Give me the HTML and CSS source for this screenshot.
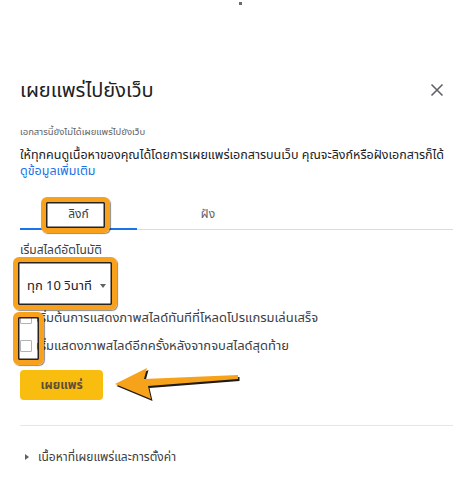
FILE: index.html
```html
<!DOCTYPE html>
<html lang="th">
<head>
<meta charset="utf-8">
<title>เผยแพร่ไปยังเว็บ</title>
<link rel="stylesheet" href="styles.css">
</head>
<body>
<div class="speck"></div>
<main class="dialog">
  <header class="head">
    <h1 class="title">เผยแพร่ไปยังเว็บ</h1>
    <button class="close" aria-label="ปิด">
      <svg width="14" height="14" viewBox="0 0 14 14"><path d="M1.5 1.5L12.5 12.5M12.5 1.5L1.5 12.5" stroke="#5f6368" stroke-width="1.6" fill="none"/></svg>
    </button>
  </header>
  <p class="status">เอกสารนี้ยังไม่ได้เผยแพร่ไปยังเว็บ</p>
  <p class="desc">ให้ทุกคนดูเนื้อหาของคุณได้โดยการเผยแพร่เอกสารบนเว็บ คุณจะลิงก์หรือฝังเอกสารก็ได้ <a class="more" href="#">ดูข้อมูลเพิ่มเติม</a></p>

  <nav class="tabs">
    <div class="tab tab-link active">ลิงก์<span class="hl hl-tab"></span></div>
    <div class="tab tab-embed">ฝัง</div>
  </nav>

  <section class="form">
    <div class="label">เริ่มสไลด์อัตโนมัติ</div>
    <div class="select">ทุก 10 วินาที <span class="caret"></span><span class="hl hl-select"></span></div>
    <div class="checks">
      <label class="check"><span class="box"></span>เริ่มต้นการแสดงภาพสไลด์ทันทีที่โหลดโปรแกรมเล่นเสร็จ</label>
      <label class="check"><span class="box"></span>เริ่มแสดงภาพสไลด์อีกครั้งหลังจากจบสไลด์สุดท้าย</label>
      <span class="hl hl-checks"></span>
    </div>
    <div class="actions">
      <button class="publish">เผยแพร่</button>
      <svg class="arrow" width="135" height="40" viewBox="0 0 135 40">
        <polygon points="6.5,21 38.5,5 35.5,16 129.5,12 129.5,16 39.5,23 42.5,36" fill="#1e1a14"/>
        <polygon points="5,19 37,3 34,14 128,10 128,14 38,21 41,34" fill="#f7a21b"/>
      </svg>
    </div>
  </section>

  <hr class="sep">
  <div class="disclosure"><span class="tri"></span>เนื้อหาที่เผยแพร่และการตั้งค่า</div>
</main>
</body>
</html>
```

FILE: styles.css
```css
* { box-sizing: border-box; }

html, body {
  margin: 0;
  background: #ffffff;
}

body {
  font-family: "Noto Sans", "Noto Sans Thai", Roboto, sans-serif;
  color: #202124;
  position: relative;
  width: 474px;
  height: 486px;
  overflow: hidden;
}

.speck {
  position: absolute;
  left: 239px;
  top: 2px;
  width: 3px;
  height: 3px;
  background: #6b6b6b;
}

.dialog {
  padding: 76px 21px 0 20px;
}

.head {
  display: flex;
  align-items: center;
  justify-content: space-between;
  height: 28px;
}

.title {
  margin: 0;
  font-size: 20px;
  font-weight: 400;
  line-height: 28px;
  color: #202124;
}

.close {
  border: 0;
  background: none;
  padding: 0;
  margin-right: 9px;
  width: 14px;
  height: 14px;
  display: flex;
}

.status {
  margin: 21px 0 0;
  font-size: 9.5px;
  line-height: 14px;
  color: #5f6368;
}

.desc {
  margin: 8px 0 0;
  font-size: 12.5px;
  line-height: 16px;
  color: #202124;
}

.more {
  color: #1a73e8;
  text-decoration: none;
  white-space: nowrap;
}

.tabs {
  margin-top: 18px;
  display: flex;
  border-bottom: 1px solid #dadce0;
}

.tab {
  position: relative;
  padding-top: 3px;
  line-height: 28px;
  height: 33px;
  margin-bottom: -1px;
  border-bottom: 2px solid transparent;
  text-align: center;
  font-size: 12px;
  color: #5f6368;
}

.tab-link { width: 117px; }
.tab-embed { width: 142px; }

.tab.active {
  border-bottom-color: #1a73e8;
  color: #3c4043;
}

.hl {
  position: absolute;
  border: 5px solid #f8a11c;
  border-radius: 6px;
  box-shadow: inset 0 0 0 1.5px #262322, 1px 1px 1px rgba(0, 0, 0, 0.45);
  pointer-events: none;
}

.hl-tab {
  left: 21px;
  top: 0;
  width: 69px;
  height: 36px;
}

.label {
  margin-top: 12px;
  font-size: 12px;
  line-height: 16px;
  color: #3c4043;
}

.select {
  position: relative;
  margin-top: 10px;
  height: 36px;
  width: 95px;
  padding-left: 7px;
  display: flex;
  align-items: center;
  gap: 8px;
  font-size: 13px;
  color: #202124;
}

.caret {
  width: 0;
  height: 0;
  border-left: 3.5px solid transparent;
  border-right: 3.5px solid transparent;
  border-top: 4px solid #5f6368;
}

.hl-select {
  left: -7px;
  top: -11px;
  width: 104px;
  height: 53px;
}

.checks {
  position: relative;
  display: flex;
  flex-direction: column;
}

.check {
  height: 28px;
  display: flex;
  align-items: center;
  gap: 4px;
  font-size: 13px;
  color: #3c4043;
}

.box {
  width: 12px;
  height: 12px;
  border: 1px solid #b0b3b8;
  border-radius: 1px;
  flex: none;
}

.hl-checks {
  left: -7px;
  top: 8px;
  width: 31px;
  height: 53px;
}

.actions {
  position: relative;
  margin-top: 10px;
  height: 30px;
}

.publish {
  width: 83px;
  height: 30px;
  border: 0;
  border-radius: 4px;
  background: #f9bd10;
  color: #5e4e36;
  font-family: inherit;
  font-size: 12px;
  font-weight: 700;
}

.arrow {
  position: absolute;
  left: 90px;
  top: -5px;
}

.sep {
  margin: 25px 0 0;
  border: 0;
  border-top: 1px solid #e6e6e6;
}

.disclosure {
  margin-top: 23px;
  display: flex;
  align-items: center;
  gap: 9px;
  padding-left: 5px;
  font-size: 12px;
  line-height: 16px;
  color: #3c4043;
}

.tri {
  width: 0;
  height: 0;
  border-top: 3px solid transparent;
  border-bottom: 3px solid transparent;
  border-left: 4px solid #5f6368;
}
```
